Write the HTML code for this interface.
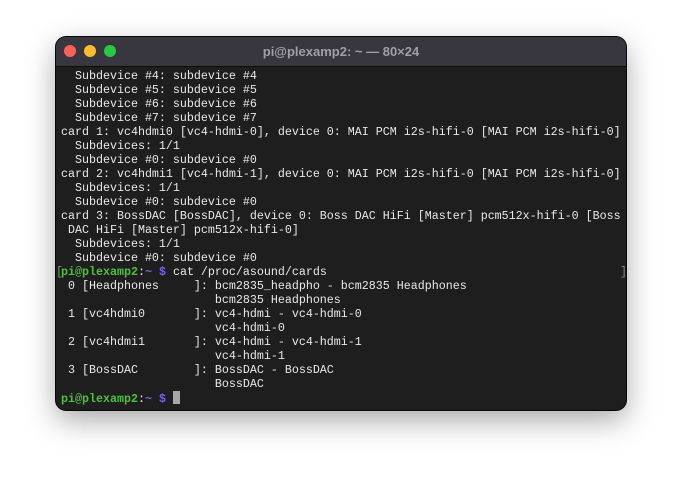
<!DOCTYPE html>
<html><head><style>
html,body{margin:0;padding:0;background:#fff;width:682px;height:483px;overflow:hidden}
.win{position:absolute;left:56px;top:37px;width:570px;height:373px;border-radius:10px;background:#1e1e1e;box-shadow:0 10px 30px rgba(0,0,0,.35),0 0 0 1px #0a0a0a;overflow:hidden}
.tb{height:29px;background:#38363e;border-bottom:1px solid #0c0c0c;position:relative}
.dot{position:absolute;top:8px;width:12px;height:12px;border-radius:50%}
.title{position:absolute;left:0;right:0;top:7px;text-align:center;color:#a09fa6;font:bold 13px "Liberation Sans",sans-serif}
pre{position:absolute;left:5px;top:32px;margin:0;font:11.67px/14px "Liberation Mono",monospace;color:#e8e8e8}
.g{color:#4cc23a;font-weight:bold}.p{color:#7f5ee6;font-weight:bold}
.br{position:absolute;color:#888;font:11.67px/14px "Liberation Mono",monospace}
.cur{display:inline-block;width:7px;height:13px;background:#a8a8a8;vertical-align:-2px}
</style></head><body>
<div class="win">
<div class="tb">
<div class="dot" style="left:8px;background:#fe5f57"></div>
<div class="dot" style="left:28px;background:#febc2e"></div>
<div class="dot" style="left:48px;background:#28c840"></div>
<div class="title">pi@plexamp2: ~ — 80×24</div>
</div>
<pre>  Subdevice #4: subdevice #4
  Subdevice #5: subdevice #5
  Subdevice #6: subdevice #6
  Subdevice #7: subdevice #7
card 1: vc4hdmi0 [vc4-hdmi-0], device 0: MAI PCM i2s-hifi-0 [MAI PCM i2s-hifi-0]
  Subdevices: 1/1
  Subdevice #0: subdevice #0
card 2: vc4hdmi1 [vc4-hdmi-1], device 0: MAI PCM i2s-hifi-0 [MAI PCM i2s-hifi-0]
  Subdevices: 1/1
  Subdevice #0: subdevice #0
card 3: BossDAC [BossDAC], device 0: Boss DAC HiFi [Master] pcm512x-hifi-0 [Boss
 DAC HiFi [Master] pcm512x-hifi-0]
  Subdevices: 1/1
  Subdevice #0: subdevice #0
<span class="g">pi@plexamp2</span>:<span class="p">~ $</span> cat /proc/asound/cards
 0 [Headphones     ]: bcm2835_headpho - bcm2835 Headphones
                      bcm2835 Headphones
 1 [vc4hdmi0       ]: vc4-hdmi - vc4-hdmi-0
                      vc4-hdmi-0
 2 [vc4hdmi1       ]: vc4-hdmi - vc4-hdmi-1
                      vc4-hdmi-1
 3 [BossDAC        ]: BossDAC - BossDAC
                      BossDAC
<span class="g">pi@plexamp2</span>:<span class="p">~ $</span> <span class="cur"></span></pre>
<span class="br" style="left:0px;top:228px">[</span>
<span class="br" style="left:564px;top:228px">]</span>
</div>
</body></html>
